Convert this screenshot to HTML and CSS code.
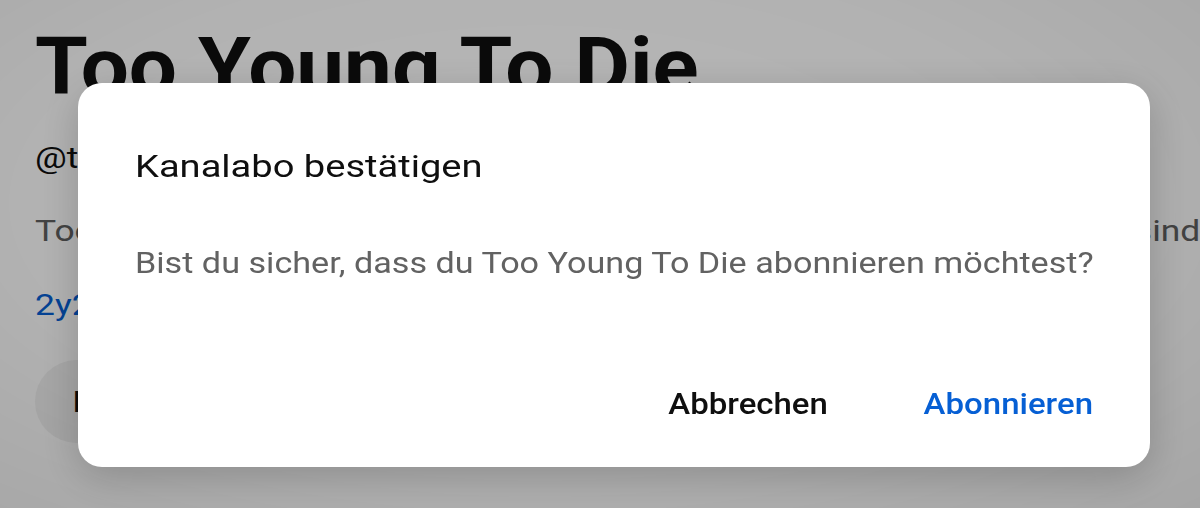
FILE: index.html
```html
<!DOCTYPE html>
<html lang="de">
<head>
<meta charset="utf-8">
<title>Too Young To Die</title>
<link rel="stylesheet" href="styles.css">
</head>
<body>
<main class="page">
  <h1 class="channel-name"><span class="stretch-sm">Too Young To Die</span></h1>
  <div class="line handle"><span class="stretch">@tooyoungtodie · 1,2 Mio. Abonnenten</span></div>
  <div class="line desc"><span class="stretch">Too Young To Die ist ein Kanal über Menschen, die zu früh gegangen</span><span class="stretch desc-end">sind</span></div>
  <div class="line link"><span class="stretch">2y2d.de</span></div>
  <div class="actions"><button class="pill">Beitreten</button></div>
</main>
<div class="scrim"></div>
<div class="dialog" role="dialog">
  <h2 class="dialog-title"><span class="stretch-title">Kanalabo bestätigen</span></h2>
  <p class="dialog-text"><span class="stretch-body">Bist du sicher, dass du Too Young To Die abonnieren möchtest?</span></p>
  <div class="dialog-actions">
    <button class="btn btn-cancel">Abbrechen</button>
    <button class="btn btn-confirm">Abonnieren</button>
  </div>
</div>
</body>
</html>
```

FILE: styles.css
```css
* { box-sizing: border-box; }
html, body { margin: 0; height: 100%; }
body {
  background: #ffffff;
  font-family: Roboto, "Liberation Sans", Arial, sans-serif;
  overflow: hidden;
}
.page {
  padding: 19px 0 0 35px;
  display: flex;
  flex-direction: column;
}
.channel-name {
  margin: 0;
  font-size: 80px;
  font-weight: 700;
  line-height: 96px;
  color: #0f0f0f;
  white-space: nowrap;
}
.stretch-sm {
  display: inline-block;
  transform: scaleX(1.066);
  transform-origin: left center;
}
.stretch {
  display: inline-block;
  transform: scaleX(1.18);
  transform-origin: left center;
}
.line {
  font-size: 30px;
  line-height: 40px;
  white-space: nowrap;
}
.handle {
  margin-top: 23px;
  color: #0f0f0f;
}
.desc {
  margin-top: 33px;
  color: #606060;
  display: flex;
  justify-content: space-between;
  overflow: hidden;
}
.desc .desc-end {
  transform-origin: right center;
}
.link {
  margin-top: 34px;
  color: #065fd4;
}
.actions { margin-top: 35px; display: flex; }
.pill {
  border: 0;
  border-radius: 42px;
  background: #f2f2f2;
  height: 83px;
  padding: 0 38px;
  font-family: inherit;
  font-size: 30px;
  font-weight: 500;
  color: #0f0f0f;
}
.scrim {
  position: fixed;
  inset: 0;
  background: radial-gradient(ellipse at 45% 40%, rgba(0,0,0,0.28) 0%, rgba(0,0,0,0.30) 55%, rgba(0,0,0,0.35) 100%);
}
.dialog {
  position: fixed;
  left: 78px;
  top: 83px;
  width: 1072px;
  height: 384px;
  background: #ffffff;
  border-radius: 24px;
  box-shadow: 0 10px 40px rgba(0,0,0,0.2);
  padding: 63px 57px 45px 57px;
  display: flex;
  flex-direction: column;
}
.dialog-title {
  margin: 0;
  font-size: 32px;
  font-weight: 400;
  line-height: 40px;
  color: #0f0f0f;
  white-space: nowrap;
}
.stretch-title {
  display: inline-block;
  transform: scaleX(1.19);
  transform-origin: left center;
}
.dialog-text {
  margin: 57px 0 0;
  font-size: 29px;
  line-height: 40px;
  color: #626262;
  white-space: nowrap;
}
.stretch-body {
  display: inline-block;
  transform: scaleX(1.178);
  transform-origin: left center;
}
.dialog-actions {
  margin-top: auto;
  display: flex;
  justify-content: flex-end;
  gap: 87px;
  transform: scaleX(1.1);
  transform-origin: right center;
}
.btn {
  border: 0;
  background: none;
  padding: 0;
  font-family: inherit;
  font-size: 30px;
  font-weight: 500;
  line-height: 36px;
}
.btn-cancel { color: #0f0f0f; }
.btn-confirm { color: #065fd4; }
```
